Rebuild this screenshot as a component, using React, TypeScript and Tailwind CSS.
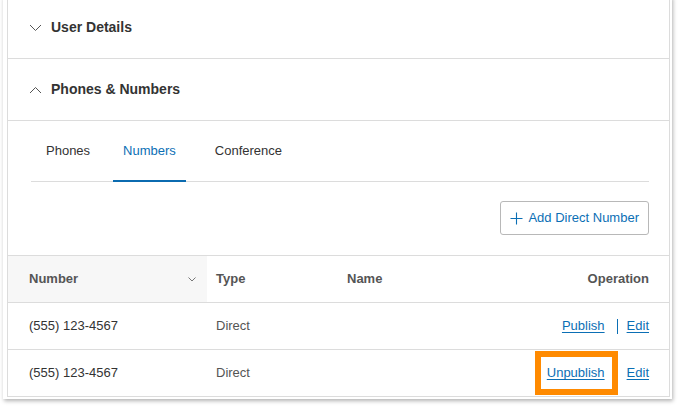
import type { ReactNode } from 'react';

const font = { fontFamily: '"Liberation Sans", Arial, sans-serif' };

function Chevron({ up }: { up?: boolean }) {
  return (
    <svg width="13" height="8" viewBox="0 0 13 8" className="shrink-0">
      <polyline
        points={up ? '1,7 6.5,1.5 12,7' : '1,1 6.5,6.5 12,1'}
        fill="none"
        stroke="#555"
        strokeWidth="1"
      />
    </svg>
  );
}

function Section({ title, open }: { title: string; open?: boolean }) {
  return (
    <div className="h-[62px] flex items-center gap-[9px] pl-[21px] border-b border-[#dcdcdc]">
      <Chevron up={open} />
      <span className="text-[14px] font-bold text-[#333]">{title}</span>
    </div>
  );
}

function Link({ children }: { children: ReactNode }) {
  return <span className="text-[13px] text-[#0b6fb5] underline underline-offset-2">{children}</span>;
}

export default function App() {
  const tabs = [
    { label: 'Phones', cls: 'ml-[5px]' },
    { label: 'Numbers', cls: 'ml-[13px]', active: true },
    { label: 'Conference', cls: 'ml-[19px]' },
  ];

  const rows = [
    { number: '(555) 123-4567', action: 'Publish' },
    { number: '(555) 123-4567', action: 'Unpublish', marked: true },
  ];

  return (
    <div className="bg-white w-[681px] h-[407px] overflow-hidden" style={font}>
      <div className="-mt-[4px] ml-[3px] w-[669px] pl-[4px] pr-[2px] pb-[2px] bg-white shadow-[1px_2px_4px_rgba(0,0,0,0.3)]">
        <div className="border border-[#dcdcdc]">
          <Section title="User Details" />
          <Section title="Phones & Numbers" open />

          {/* tabs */}
          <div className="pl-[23px] pr-[20px]">
            <div className="flex border-b border-[#dcdcdc]">
              {tabs.map((t) => (
                <div
                  key={t.label}
                  className={`relative h-[60px] px-[10px] flex items-center text-[13px] ${t.cls} ${
                    t.active ? 'text-[#0b6fb5]' : 'text-[#333]'
                  }`}
                >
                  {t.label}
                  {t.active && <span className="absolute left-0 right-0 -bottom-px h-[2px] bg-[#0b6bb0]" />}
                </div>
              ))}
            </div>
          </div>

          <div className="flex justify-end pt-[19px] pb-[20px] pr-[20px]">
            <button className="h-[34px] px-[9px] flex items-center gap-[5px] border border-[#b8b8b8] rounded-[3px] text-[13px] text-[#0b6fb5]">
              <svg width="13" height="13" viewBox="0 0 13 13">
                <path d="M6.5 0.5v12M0.5 6.5h12" stroke="#0b6fb5" strokeWidth="1.1" fill="none" />
              </svg>
              Add Direct Number
            </button>
          </div>

          {/* table */}
          <div className="grid grid-cols-[199px_131px_1fr_auto] border-t border-[#dcdcdc] text-[13px]">
            <div className="h-[46px] bg-[#f7f7f7] flex items-center justify-between pl-[21px] pr-[11px] font-bold text-[#555]">
              Number
              <svg width="8" height="5" viewBox="0 0 8 5">
                <polyline points="0.5,0.5 4,4 7.5,0.5" fill="none" stroke="#777" strokeWidth="1" />
              </svg>
            </div>
            <div className="h-[46px] flex items-center pl-[9px] font-bold text-[#555]">Type</div>
            <div className="h-[46px] flex items-center pl-[9px] font-bold text-[#555]">Name</div>
            <div className="h-[46px] flex items-center justify-end pr-[20px] font-bold text-[#555]">Operation</div>

            {rows.map((r, i) => (
              <div key={i} className="contents">
                <div className="h-[47px] border-t border-[#dcdcdc] flex items-center pl-[21px] text-[#333]">{r.number}</div>
                <div className="h-[47px] border-t border-[#dcdcdc] flex items-center pl-[9px] text-[#555]">Direct</div>
                <div className="h-[47px] border-t border-[#dcdcdc]" />
                <div className="h-[47px] border-t border-[#dcdcdc] flex items-center justify-end pr-[20px]">
                  <span className="relative">
                    <Link>{r.action}</Link>
                    {r.marked && (
                      <span className="absolute -left-[12px] -right-[13px] -top-[12px] -bottom-[12px] border-[6px] border-[#ff8a00]" />
                    )}
                  </span>
                  <span className="w-px h-[15px] bg-[#0b6fb5] ml-[12px] mr-[9px]" />
                  <Link>Edit</Link>
                </div>
              </div>
            ))}
          </div>
        </div>
      </div>
    </div>
  );
}
